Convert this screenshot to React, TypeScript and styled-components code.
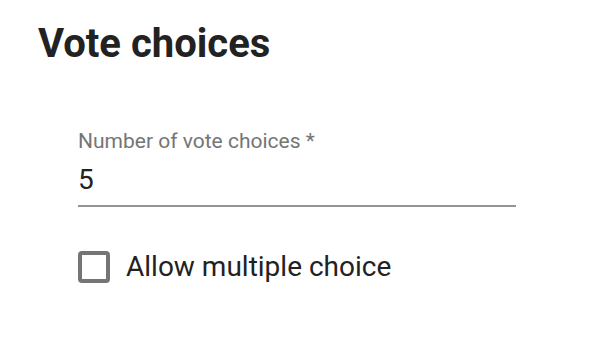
import { createGlobalStyle, styled } from "styled-components";

const GlobalStyle = createGlobalStyle`
  html, body {
    margin: 0;
    padding: 0;
    background: #ffffff;
    font-family: Roboto, "Liberation Sans", sans-serif;
  }
`;

const Page = styled.div`
  padding: 20px 38px;
  display: flex;
  flex-direction: column;
`;

const Title = styled.h2`
  margin: 0;
  font-size: 40px;
  font-weight: 700;
  color: #222222;
  line-height: 48px;
`;

const Form = styled.div`
  padding: 61px 0 0 40px;
  width: 438px;
  display: flex;
  flex-direction: column;
`;

const Field = styled.label`
  display: flex;
  flex-direction: column;
  border-bottom: 2px solid #949494;
`;

const FieldLabel = styled.span`
  font-size: 21px;
  line-height: 24px;
  color: #757575;
`;

const FieldValue = styled.span`
  margin-top: 9px;
  font-size: 28px;
  line-height: 36px;
  color: #222222;
  padding-bottom: 7px;
`;

const CheckRow = styled.label`
  display: flex;
  align-items: center;
  gap: 16px;
  margin-top: 43px;
`;

const Box = styled.span<{ $checked?: boolean }>`
  width: 24px;
  height: 24px;
  border: 4px solid #757575;
  border-radius: 4px;
  background: ${(p) => (p.$checked ? "#757575" : "transparent")};
`;

const CheckText = styled.span`
  font-size: 28px;
  color: #222222;
`;

export default function App() {
  return (
    <>
      <GlobalStyle />
      <Page>
        <Title>Vote choices</Title>
        <Form>
          <Field>
            <FieldLabel>Number of vote choices *</FieldLabel>
            <FieldValue>5</FieldValue>
          </Field>
          <CheckRow>
            <Box />
            <CheckText>Allow multiple choice</CheckText>
          </CheckRow>
        </Form>
      </Page>
    </>
  );
}
